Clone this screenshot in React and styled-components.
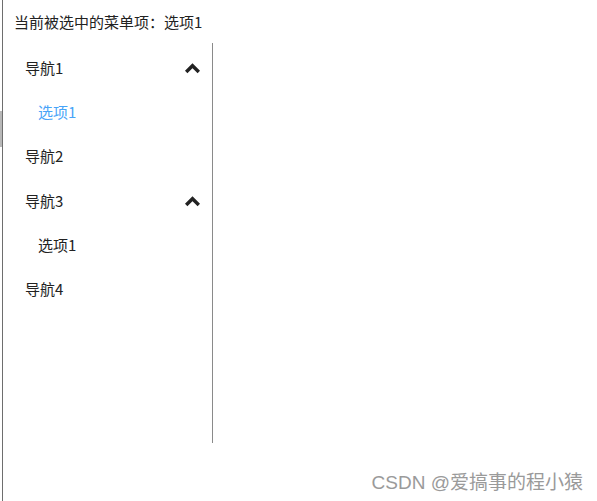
import React, { useState } from 'react'
import styled, { createGlobalStyle } from 'styled-components'

const GlobalStyle = createGlobalStyle`
    html, body {
        margin: 0;
        padding: 0;
        background: #fff;
    }
    body {
        font-family: "Noto Sans CJK SC", "Noto Sans", sans-serif;
        color: #222;
    }
`

const menus = [
    { title: '导航1', open: true, children: ['选项1'] },
    { title: '导航2' },
    { title: '导航3', open: true, children: ['选项1'] },
    { title: '导航4' },
]

const Chevron = () => (
    <svg width="17" height="12" viewBox="0 0 17 12">
        <path d="M2.2 10 L8.5 3.7 L14.8 10" fill="none" stroke="#222" strokeWidth="3.4" strokeLinejoin="miter" />
    </svg>
)

const App = () => {
    const [selected] = useState('0-0')

    return (
        <>
            <GlobalStyle />
            <Page>
                <Edge>
                    <Handle />
                </Edge>
                <Frame>
                    <Title>当前被选中的菜单项：选项1</Title>
                    <Menu>
                        {menus.map((m, i) => (
                            <div key={m.title}>
                                <Item>
                                    <span>{m.title}</span>
                                    {m.children && <Chevron />}
                                </Item>
                                {m.open && m.children.map((c, j) => (
                                    <SubItem key={c} $active={selected === `${i}-${j}`}>{c}</SubItem>
                                ))}
                            </div>
                        ))}
                    </Menu>
                </Frame>
                <Watermark>CSDN @爱搞事的程小猿</Watermark>
            </Page>
        </>
    )
}

export default App

const Page = styled.div`
    position: relative;
    display: flex;
    height: 501px;
    overflow: hidden;
`
const Edge = styled.div`
    width: 2px;
    display: flex;
    flex-direction: column;
`
const Handle = styled.div`
    margin-top: 111px;
    height: 36px;
    background-color: #b8b8b8;
`
const Frame = styled.div`
    flex: 1;
    border-left: 1px solid #6e6e6e;
`
const Title = styled.div`
    height: 43px;
    display: flex;
    align-items: center;
    padding-left: 11px;
    font-size: 15px;
    color: #222;
`
const Menu = styled.div`
    width: 210px;
    height: 400px;
    box-sizing: border-box;
    padding-top: 2px;
    border-right: 1px solid #8a8a8a;
`
const Item = styled.div`
    height: 45px;
    display: flex;
    align-items: center;
    justify-content: space-between;
    padding: 0 11px 0 22px;
    font-size: 15px;
    color: #222;
    cursor: pointer;
`
const SubItem = styled.div`
    height: 43px;
    display: flex;
    align-items: center;
    padding-left: 35px;
    font-size: 15px;
    color: ${p => (p.$active ? '#48a4f8' : '#222')};
    cursor: pointer;
`
const Watermark = styled.div`
    position: absolute;
    right: 14px;
    bottom: 7px;
    font-family: "Liberation Sans", "Noto Sans CJK SC", sans-serif;
    font-size: 19px;
    color: #9a9a9a;
    text-shadow: 0 0 1px #fff;
`
